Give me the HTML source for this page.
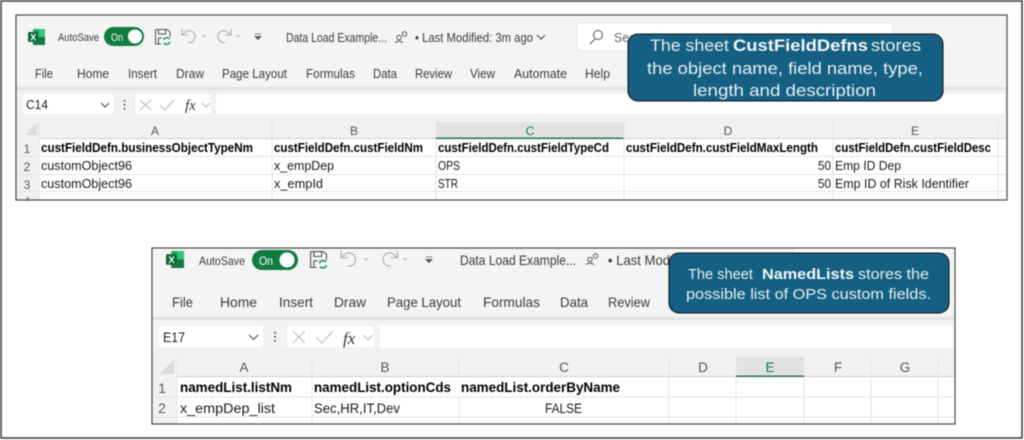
<!DOCTYPE html>
<html lang="en">
<head>
<meta charset="utf-8">
<title>Data Load Example</title>
<style>
html,body{margin:0;padding:0;background:#fff;width:1024px;height:440px;overflow:hidden}
svg{display:block;filter:blur(.4px)}
text{font-family:"Liberation Sans",sans-serif;fill:#333}
.c{font-size:12.500px;fill:#1a1a1a}
.b{font-size:12.500px;font-weight:bold;fill:#000}
.t{font-size:12.500px;fill:#3c3c3c}
.h{font-size:12px;fill:#555;text-anchor:middle}
.w{fill:#e6eef2;font-size:17px}
.wb{fill:#f2f6f8;font-size:17px;font-weight:bold}
.b2{font-size:14px;font-weight:bold;fill:#000}
.c2{font-size:14px;fill:#1a1a1a}
.t2{font-size:14px;fill:#3c3c3c}
</style>
</head>
<body>
<svg width="1024" height="440" viewBox="0 0 1024 440" xmlns="http://www.w3.org/2000/svg">
<defs>
<g id="xl">
<rect x="5" y="0" width="12" height="16" rx="1" fill="#21a366"/>
<rect x="11" y="0" width="6" height="8" fill="#33c481"/>
<rect x="5" y="8" width="12" height="8" fill="#107c41"/>
<rect x="0" y="3" width="10" height="10" rx="1" fill="#0e6a38"/>
<text x="2.200" y="11.500" style="font-size:9px;font-weight:bold;fill:#fff">X</text>
</g>
<g id="sv" fill="none" stroke="#555" stroke-width="1">
<path d="M.5 .5H12L15 3V8M.5 .5V15H6"/>
<path d="M3.500 .5V5H10.500V.5M3.500 15V9H7"/>
<path d="M8.500 11A3.500 3.500 0 0 1 14.500 10M15 13A3.500 3.500 0 0 1 9 14" stroke="#21a366" stroke-width="1.600"/>
</g>
<g id="und" fill="none" stroke="#aaa" stroke-width="1">
<path d="M1 1V7H7M1 7L5 3.500A6 6 0 1 1 7 14.500"/>
</g>
<g id="red" fill="none" stroke="#aaa" stroke-width="1">
<path d="M15 1V7H9M15 7L11 3.500A6 6 0 1 0 9 14.500"/>
</g>
<g id="ppl" fill="none" stroke="#555" stroke-width="1">
<circle cx="4" cy="6.500" r="2.200"/><path d="M.5 12C1 9.500 7 9.500 7.500 12"/>
<circle cx="9.500" cy="3" r="2.200"/>
</g>
</defs>

<!-- outer frame -->
<rect x="1" y="1" width="1021" height="437" fill="#fff" stroke="#444" stroke-width="1.600"/>

<!-- ================= TOP WINDOW ================= -->
<rect x="16" y="15" width="991" height="185" fill="#fff"/>
<rect x="16" y="15" width="991" height="72" fill="#f4f4f4"/>
<rect x="16" y="87" width="991" height="3" fill="#e2e2e2"/>
<rect x="16" y="90" width="991" height="32" fill="#f1f1f1"/>
<rect x="16" y="122" width="991" height="17" fill="#f1f1f1"/>
<rect x="16" y="139" width="23" height="61" fill="#f1f1f1"/>

<use href="#xl" x="28" y="29"/>
<text x="58" y="41" textLength="41" lengthAdjust="spacingAndGlyphs" style="font-size:11px;fill:#3c3c3c">AutoSave</text>
<rect x="104" y="27" width="40" height="19" rx="9.500" fill="#107c41"/>
<text x="111" y="41" textLength="12" lengthAdjust="spacingAndGlyphs" style="font-size:11px;fill:#fff">On</text>
<circle cx="135" cy="36.500" r="7" fill="#fff"/>
<use href="#sv" x="155" y="29"/>
<use href="#und" x="181" y="28"/>
<path d="M202 35l2 2 2-2" fill="none" stroke="#bbb"/>
<use href="#red" x="216" y="28"/>
<path d="M236 35l2 2 2-2" fill="none" stroke="#bbb"/>
<path d="M255 34h6M255 36.500h6l-3 3z" fill="#555" stroke="#555" stroke-width=".8"/>
<text class="t" x="286" y="42" textLength="101" lengthAdjust="spacingAndGlyphs">Data Load Example...</text>
<use href="#ppl" x="395" y="31"/>
<text class="t" x="415" y="42" textLength="118" lengthAdjust="spacingAndGlyphs">• Last Modified: 3m ago</text>
<path d="M537 35l4 4 4-4" fill="none" stroke="#444"/>

<rect x="577" y="23" width="316" height="28" rx="3" fill="#fff" stroke="#e8e8e8"/>
<circle cx="598" cy="35" r="4.500" fill="none" stroke="#555"/>
<path d="M595 39l-5 5" stroke="#555" fill="none"/>
<text x="614" y="42" style="font-size:12.500px;fill:#666">Sea</text>

<text class="t" x="35" y="78" textLength="18" lengthAdjust="spacingAndGlyphs">File</text>
<text class="t" x="77" y="78" textLength="32" lengthAdjust="spacingAndGlyphs">Home</text>
<text class="t" x="128" y="78" textLength="29" lengthAdjust="spacingAndGlyphs">Insert</text>
<text class="t" x="176" y="78" textLength="28" lengthAdjust="spacingAndGlyphs">Draw</text>
<text class="t" x="222" y="78" textLength="65" lengthAdjust="spacingAndGlyphs">Page Layout</text>
<text class="t" x="306" y="78" textLength="49" lengthAdjust="spacingAndGlyphs">Formulas</text>
<text class="t" x="373" y="78" textLength="24" lengthAdjust="spacingAndGlyphs">Data</text>
<text class="t" x="415" y="78" textLength="37" lengthAdjust="spacingAndGlyphs">Review</text>
<text class="t" x="470" y="78" textLength="25" lengthAdjust="spacingAndGlyphs">View</text>
<text class="t" x="514" y="78" textLength="53" lengthAdjust="spacingAndGlyphs">Automate</text>
<text class="t" x="585" y="78" textLength="25" lengthAdjust="spacingAndGlyphs">Help</text>

<rect x="23" y="94" width="91" height="20" rx="3" fill="#fff"/>
<text x="26" y="109" textLength="22" lengthAdjust="spacingAndGlyphs" style="font-size:12.500px;fill:#222">C14</text>
<path d="M101 103l4 4 4-4" fill="none" stroke="#444"/>
<path d="M124.500 100v1.500M124.500 104v1.500M124.500 108v1.500" stroke="#444" stroke-width="1.600"/>
<rect x="135" y="94" width="76" height="20" rx="3" fill="#fff"/>
<path d="M140 100l11 10M151 100l-11 10M160 105l5 5 9-10" fill="none" stroke="#bbb"/>
<text x="185" y="110" style="font-family:'Liberation Serif',serif;font-style:italic;font-size:15px;fill:#333">fx</text>
<path d="M202 103l4 4 4-4" fill="none" stroke="#bbb"/>
<rect x="216" y="94" width="789" height="20" rx="3" fill="#fff"/>

<!-- headers -->
<path d="M25 135h12v-12z" fill="#dcdcdc"/>
<rect x="436" y="122" width="188" height="16" fill="#e2e2e2"/>
<rect x="436" y="137.500" width="188" height="1.500" fill="#217346"/>
<rect x="39" y="138" width="397" height="1" fill="#d0d0d0"/>
<rect x="624" y="138" width="383" height="1" fill="#d0d0d0"/>
<g stroke="#e4e4e4" fill="none">
<path d="M39 122V200M272 122V200M436 139V200M624 122V200M833 122V200M998 122V200"/>
<path d="M17 156.500H1006M17 174.500H1006M17 191.500H1006"/>
</g>
<text class="h" x="155" y="135">A</text>
<text class="h" x="354" y="135">B</text>
<text class="h" x="530" y="135" style="fill:#217346">C</text>
<text class="h" x="728" y="135">D</text>
<text class="h" x="915" y="135">E</text>
<text class="h" x="27" y="153">1</text>
<text class="h" x="27" y="171">2</text>
<text class="h" x="27" y="189">3</text>
<text class="h" x="27" y="204" style="font-size:10px">4</text>

<text class="b" x="41" y="152" textLength="212" lengthAdjust="spacingAndGlyphs">custFieldDefn.businessObjectTypeNm</text>
<text class="b" x="274" y="152" textLength="149" lengthAdjust="spacingAndGlyphs">custFieldDefn.custFieldNm</text>
<text class="b" x="438" y="152" textLength="171" lengthAdjust="spacingAndGlyphs">custFieldDefn.custFieldTypeCd</text>
<text class="b" x="626" y="152" textLength="192" lengthAdjust="spacingAndGlyphs">custFieldDefn.custFieldMaxLength</text>
<text class="b" x="835" y="152" textLength="156" lengthAdjust="spacingAndGlyphs">custFieldDefn.custFieldDesc</text>

<text class="c" x="41" y="170" textLength="91" lengthAdjust="spacingAndGlyphs">customObject96</text>
<text class="c" x="274" y="170" textLength="60" lengthAdjust="spacingAndGlyphs">x_empDep</text>
<text class="c" x="438" y="170" textLength="22" lengthAdjust="spacingAndGlyphs">OPS</text>
<text class="c" x="818" y="170" textLength="13" lengthAdjust="spacingAndGlyphs">50</text>
<text class="c" x="835" y="170" textLength="66" lengthAdjust="spacingAndGlyphs">Emp ID Dep</text>

<text class="c" x="41" y="188" textLength="91" lengthAdjust="spacingAndGlyphs">customObject96</text>
<text class="c" x="274" y="188" textLength="49" lengthAdjust="spacingAndGlyphs">x_empId</text>
<text class="c" x="438" y="188" textLength="20" lengthAdjust="spacingAndGlyphs">STR</text>
<text class="c" x="818" y="188" textLength="13" lengthAdjust="spacingAndGlyphs">50</text>
<text class="c" x="835" y="188" textLength="134" lengthAdjust="spacingAndGlyphs">Emp ID of Risk Identifier</text>

<rect x="3" y="201" width="1017" height="30" fill="#fff"/>
<rect x="16" y="15" width="991" height="185" fill="none" stroke="#555" stroke-width="1.300"/>

<!-- callout 1 -->
<rect x="628" y="34" width="315" height="67" rx="10" fill="#156082" stroke="#111" stroke-width="1"/>
<text class="w" x="650" y="51" textLength="79" lengthAdjust="spacingAndGlyphs">The sheet</text>
<text class="wb" x="733" y="51" textLength="135" lengthAdjust="spacingAndGlyphs">CustFieldDefns</text>
<text class="w" x="871" y="51" textLength="50" lengthAdjust="spacingAndGlyphs">stores</text>
<text class="w" x="647" y="74" textLength="276" lengthAdjust="spacingAndGlyphs">the object name, field name, type,</text>
<text class="w" x="693" y="96" textLength="183" lengthAdjust="spacingAndGlyphs">length and description</text>

<!-- ================= BOTTOM WINDOW ================= -->
<rect x="152" y="248" width="803" height="176" fill="#fff"/>
<rect x="152" y="248" width="803" height="69" fill="#f4f4f4"/>
<rect x="152" y="317" width="803" height="3" fill="#e2e2e2"/>
<rect x="152" y="320" width="803" height="29" fill="#f3f3f3"/>
<rect x="152" y="349" width="803" height="28" fill="#f1f1f1"/>
<rect x="152" y="377" width="25" height="47" fill="#f1f1f1"/>
<rect x="380" y="325" width="573" height="23" fill="#fff"/>
<rect x="793" y="248" width="150" height="7" fill="#fff"/>
<path d="M793 248v25" stroke="#e8e8e8"/>

<g transform="translate(166 251) scale(1.060)"><use href="#xl"/></g>
<text x="199" y="265" textLength="46" lengthAdjust="spacingAndGlyphs" style="font-size:12px;fill:#3c3c3c">AutoSave</text>
<rect x="252" y="250" width="46" height="20" rx="10" fill="#107c41"/>
<text x="259" y="265" textLength="14" lengthAdjust="spacingAndGlyphs" style="font-size:12px;fill:#fff">On</text>
<circle cx="287" cy="260" r="7.500" fill="#fff"/>
<g transform="translate(310 251) scale(1.100)"><use href="#sv"/></g>
<g transform="translate(340 250) scale(1.100)"><use href="#und"/></g>
<path d="M364 258l2 2 2-2" fill="none" stroke="#bbb"/>
<g transform="translate(381 250) scale(1.100)"><use href="#red"/></g>
<path d="M403 258l2 2 2-2" fill="none" stroke="#bbb"/>
<path d="M426 257h6M426 259.500h6l-3 3z" fill="#555" stroke="#555" stroke-width=".8"/>
<text class="t2" x="460" y="265" textLength="116" lengthAdjust="spacingAndGlyphs">Data Load Example...</text>
<use href="#ppl" x="586" y="253"/>
<text class="t2" x="608" y="265" textLength="62" lengthAdjust="spacingAndGlyphs">• Last Mod</text>

<text class="t2" x="172" y="307" textLength="21" lengthAdjust="spacingAndGlyphs">File</text>
<text class="t2" x="220" y="307" textLength="37" lengthAdjust="spacingAndGlyphs">Home</text>
<text class="t2" x="279" y="307" textLength="34" lengthAdjust="spacingAndGlyphs">Insert</text>
<text class="t2" x="334" y="307" textLength="32" lengthAdjust="spacingAndGlyphs">Draw</text>
<text class="t2" x="387" y="307" textLength="74" lengthAdjust="spacingAndGlyphs">Page Layout</text>
<text class="t2" x="483" y="307" textLength="57" lengthAdjust="spacingAndGlyphs">Formulas</text>
<text class="t2" x="560" y="307" textLength="28" lengthAdjust="spacingAndGlyphs">Data</text>
<text class="t2" x="608" y="307" textLength="42" lengthAdjust="spacingAndGlyphs">Review</text>

<rect x="158" y="325" width="106" height="23" rx="3" fill="#fff" stroke="#eee"/>
<text x="163" y="342" textLength="22" lengthAdjust="spacingAndGlyphs" style="font-size:13.500px;fill:#222">E17</text>
<path d="M249 335l4.500 4.500 4.500-4.500" fill="none" stroke="#444"/>
<path d="M275 332v1.500M275 336v1.500M275 340v1.500" stroke="#444" stroke-width="1.800"/>
<rect x="286" y="325" width="89" height="23" rx="3" fill="#fff" stroke="#eee"/>
<path d="M293 331l12 12M305 331l-12 12M316 337l6 6 11-12" fill="none" stroke="#bbb"/>
<text x="343" y="344" style="font-family:'Liberation Serif',serif;font-style:italic;font-size:17px;fill:#333">fx</text>
<path d="M363 335l5 5 5-5" fill="none" stroke="#bbb"/>

<path d="M160 374h14v-14z" fill="#dcdcdc"/>
<rect x="736" y="357" width="68" height="19" fill="#e2e2e2"/>
<rect x="736" y="375.500" width="68" height="1.500" fill="#217346"/>
<rect x="177" y="376" width="559" height="1" fill="#d0d0d0"/>
<rect x="804" y="376" width="150" height="1" fill="#d0d0d0"/>
<g stroke="#e4e4e4" fill="none">
<path d="M177 357V424M312 357V424M459 357V376M459 397V424M669 357V424M736 377V424M804 377V424M871 357V424M938 357V424"/>
<path d="M153 397H954M153 417H954"/>
</g>
<text class="h" x="244" y="372" style="font-size:13.500px">A</text>
<text class="h" x="385" y="372" style="font-size:13.500px">B</text>
<text class="h" x="564" y="372" style="font-size:13.500px">C</text>
<text class="h" x="703" y="372" style="font-size:13.500px">D</text>
<text class="h" x="770" y="372" style="font-size:13.500px;fill:#217346">E</text>
<text class="h" x="838" y="372" style="font-size:13.500px">F</text>
<text class="h" x="905" y="372" style="font-size:13.500px">G</text>
<text class="h" x="162" y="393" style="font-size:13.500px">1</text>
<text class="h" x="162" y="413" style="font-size:13.500px">2</text>

<text class="b2" x="180" y="392" textLength="112" lengthAdjust="spacingAndGlyphs">namedList.listNm</text>
<text class="b2" x="314" y="392" textLength="137" lengthAdjust="spacingAndGlyphs">namedList.optionCds</text>
<text class="b2" x="461" y="392" textLength="159" lengthAdjust="spacingAndGlyphs">namedList.orderByName</text>
<text class="c2" x="180" y="413" textLength="95" lengthAdjust="spacingAndGlyphs">x_empDep_list</text>
<text class="c2" x="314" y="413" textLength="86" lengthAdjust="spacingAndGlyphs">Sec,HR,IT,Dev</text>
<text class="c2" x="545" y="413" textLength="37" lengthAdjust="spacingAndGlyphs">FALSE</text>

<rect x="140" y="425" width="830" height="12" fill="#fff"/>
<rect x="152" y="248" width="803" height="176" fill="none" stroke="#555" stroke-width="1.300"/>

<!-- callout 2 -->
<rect x="669" y="253" width="280" height="60" rx="10" fill="#156082" stroke="#111" stroke-width="1"/>
<text class="w" x="688" y="279" textLength="65" lengthAdjust="spacingAndGlyphs" style="font-size:15px">The sheet</text>
<text class="wb" x="762" y="279" textLength="92" lengthAdjust="spacingAndGlyphs" style="font-size:15px">NamedLists</text>
<text class="w" x="858" y="279" textLength="71" lengthAdjust="spacingAndGlyphs" style="font-size:15px">stores the</text>
<text class="w" x="686" y="299" textLength="245" lengthAdjust="spacingAndGlyphs" style="font-size:15px">possible list of OPS custom fields.</text>
</svg>
</body>
</html>
